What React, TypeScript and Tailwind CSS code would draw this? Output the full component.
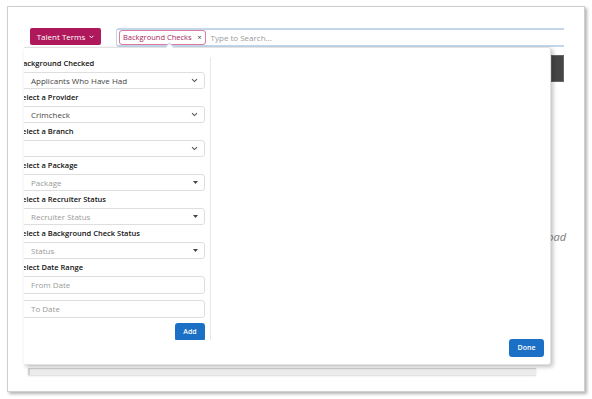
import React from 'react';

const font = { fontFamily: '"Open Sans", "Liberation Sans", sans-serif' };

const Chevron = () => (
  <svg width="7" height="5" viewBox="0 0 7 5" className="text-[#555]">
    <path d="M1 1.2 L3.5 3.6 L6 1.2" fill="none" stroke="currentColor" strokeWidth="1.1" />
  </svg>
);

const Caret = () => (
  <svg width="5" height="3" viewBox="0 0 5 3" className="text-[#444]">
    <path d="M0 0 L5 0 L2.5 3 Z" fill="currentColor" />
  </svg>
);

interface FieldProps {
  label: string;
  value?: string;
  placeholder?: boolean;
  icon?: 'chevron' | 'caret';
}

const Field: React.FC<FieldProps> = ({ label, value, placeholder, icon = 'chevron' }) => (
  <div className="flex flex-col">
    <div className="h-[10px] leading-[10px] text-[7.5px] font-semibold text-[#111] whitespace-nowrap">{label}</div>
    <div className="mt-[4px] mb-[3px] h-[17px] flex items-center justify-between pl-[12px] pr-[6px] border border-[#dedede] rounded-[3px] bg-white">
      <span className={`text-[8px] whitespace-nowrap ${placeholder ? 'text-[#9a9a9a]' : 'text-[#444]'}`}>{value}</span>
      {icon === 'chevron' ? <Chevron /> : <Caret />}
    </div>
  </div>
);

const DateInput: React.FC<{ placeholder: string }> = ({ placeholder }) => (
  <div className="h-[18px] flex items-center pl-[12px] border border-[#dedede] rounded-[3px] bg-white">
    <span className="text-[8px] text-[#9a9a9a]">{placeholder}</span>
  </div>
);

export default function App() {
  return (
    <div className="w-[592px] h-[399px] bg-white overflow-hidden" style={font}>
      <div className="ml-[7px] mt-[6px] w-[578px] h-[386px] border border-[#cfcfcf] shadow-[2px_2px_3px_rgba(0,0,0,0.3)] relative bg-white">
        {/* header row */}
        <div className="flex items-start pt-[21px] pl-[22px] pr-[20px]">
          <button className="w-[71px] h-[17px] bg-[#b0185c] rounded-[2px] flex items-center justify-center gap-[4px] text-white text-[8px]">
            Talent Terms
            <svg width="5" height="4" viewBox="0 0 5 4">
              <path d="M0.6 0.8 L2.5 2.8 L4.4 0.8" fill="none" stroke="white" strokeWidth="1" />
            </svg>
          </button>
          <div className="ml-[15px] flex-1 h-[19px] border-t-2 border-b-2 border-l border-[#c3d6ea] rounded-l-[3px] flex items-center pl-[2px]">
            <div className="h-[15px] flex items-center gap-[6px] px-[3px] border border-[#dc7aa0] rounded-[3px] bg-white">
              <span className="text-[7.5px] text-[#a81d58] whitespace-nowrap">Background Checks</span>
              <span className="text-[7px] text-[#333] leading-none">×</span>
            </div>
            <span className="ml-[5px] text-[8px] text-[#9a9a9a]">Type to Search...</span>
          </div>
        </div>

        {/* page behind the popover */}
        <div className="ml-[20px] mr-[18px] flex flex-col">
          <div className="flex justify-end pr-[2px] mt-[8px]">
            <div className="w-[13px] h-[27px] bg-[#454545] border border-[#666]" />
          </div>
          <div className="mt-[147px] flex justify-end">
            <span className="text-[11px] italic text-[#7a7a7a]">Download</span>
          </div>
          <div className="mt-[122px] mr-[30px] h-[7px] bg-[#ececec] border-t border-l-2 border-[#d2d2d2] shadow-[0_1px_2px_rgba(0,0,0,0.15)]" />
        </div>

        {/* popover */}
        <div className="absolute left-[16px] top-[40px] w-[527px] h-[318px] bg-white border-t border-r border-b border-[#e2e2e2] rounded-r-[3px] shadow-[2px_2px_4px_rgba(0,0,0,0.25)] flex">
          <div className="absolute -top-[4px] left-[142px] w-[7px] h-[7px] bg-white border-t border-l border-[#c3d6ea] rotate-45" />
          <div className="w-[187px] mt-[9px] mb-[24px] border-r border-[#e6e6e6] overflow-hidden">
            <div className="ml-[-6px] pr-[5px] pt-[1px] flex flex-col">
              <Field label="Background Checked" value="Applicants Who Have Had" />
              <Field label="Select a Provider" value="Crimcheck" />
              <Field label="Select a Branch" value="" />
              <Field label="Select a Package" value="Package" placeholder icon="caret" />
              <Field label="Select a Recruiter Status" value="Recruiter Status" placeholder icon="caret" />
              <Field label="Select a Background Check Status" value="Status" placeholder icon="caret" />
              <div className="h-[10px] leading-[10px] text-[7.5px] font-semibold text-[#111] whitespace-nowrap">Select Date Range</div>
              <div className="mt-[4px] flex flex-col gap-[6px]">
                <DateInput placeholder="From Date" />
                <DateInput placeholder="To Date" />
              </div>
              <div className="mt-[5px] flex justify-end">
                <button className="w-[30px] h-[18px] bg-[#1b70c5] rounded-[3px] text-white text-[7px] font-semibold">Add</button>
              </div>
            </div>
          </div>
          <div className="flex-1 flex items-end justify-end pr-[6px] pb-[7px]">
            <button className="w-[35px] h-[18px] bg-[#1b70c5] rounded-[3px] text-white text-[7px] font-semibold">Done</button>
          </div>
        </div>
      </div>
    </div>
  );
}
